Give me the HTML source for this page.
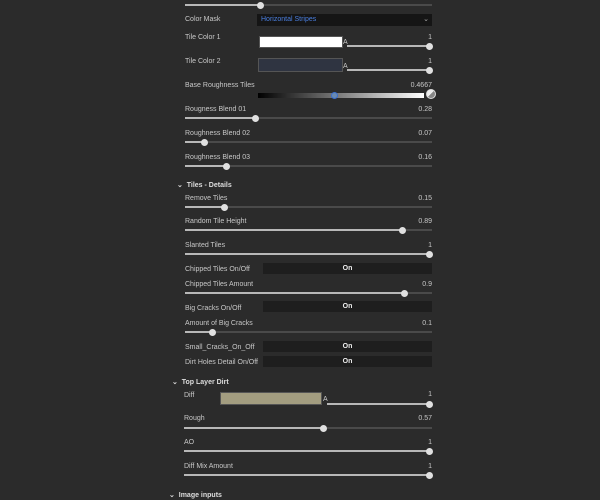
<!DOCTYPE html>
<html><head><style>
body{margin:0;width:600px;height:500px;background:#2b2b2b;font-family:"Liberation Sans",sans-serif;font-size:7px;color:#c8c8c8;position:relative;overflow:hidden}
.a{position:absolute;white-space:nowrap}
.t{position:absolute;height:2px;background:#4a4a4a}
.f{position:absolute;height:2px;background:#b8b8b8}
.k{position:absolute;width:7px;height:7px;border-radius:50%;background:#e0e0e0}
.btn{position:absolute;background:#1e1e1e;color:#eee;text-align:center;height:11px;line-height:11px;font-weight:bold}
.h{position:absolute;font-weight:bold;color:#ddd}
.v{position:absolute;right:168px;white-space:nowrap}
</style></head><body>
<script>
function s(x1,x2,y,th){document.write(`<div class="t" style="left:${x1}px;width:${x2-x1}px;top:${y-1}px"></div><div class="f" style="left:${x1}px;width:${th-x1}px;top:${y-1}px"></div><div class="k" style="left:${th-3.5}px;top:${y-3.5}px"></div>`)}
function L(x,y,t){document.write(`<div class="a" style="left:${x}px;top:${y-2.5}px">${t}</div>`)}
function V(y,t){document.write(`<div class="v" style="top:${y-2.5}px">${t}</div>`)}
s(185,432,5,260);
L(185,18,"Color Mask");
document.write('<div class="a" style="left:257px;top:14px;width:175px;height:12px;background:#151515;color:#4a7fe0;line-height:12px"><span style="margin-left:4px">Horizontal Stripes</span><span style="position:absolute;right:3px;color:#aaa">⌄</span></div>');
L(185,36,"Tile Color 1");
document.write('<div class="a" style="left:259px;top:36px;width:82px;height:10px;background:#fff;border:1px solid #555"></div>');
L(343,41,"A");V(36,"1");s(347,432,46,429);
L(185,60,"Tile Color 2");
document.write('<div class="a" style="left:258px;top:58px;width:83px;height:12px;background:#2f3441;border:1px solid #555"></div>');
L(343,65,"A");V(60,"1");s(347,432,70,429);
L(185,84,"Base Roughness Tiles");V(84,"0.4667");
document.write('<div class="a" style="left:258px;top:93px;width:166px;height:5px;background:linear-gradient(90deg,#000,#fff)"></div><div class="a" style="left:331px;top:92px;width:5px;height:5px;border-radius:50%;border:1px solid #3a6fd0;background:#6a8ab0"></div><div class="a" style="left:426px;top:89px;width:8px;height:8px;border-radius:50%;background:linear-gradient(135deg,#eee 50%,#888 50%);border:1px solid #ddd"></div>');
L(185,108,"Rougness Blend 01");V(108,"0.28");s(185,432,118,255);
L(185,132,"Roughness Blend 02");V(132,"0.07");s(185,432,142,204);
L(185,156,"Roughness Blend 03");V(156,"0.16");s(185,432,166,226);
document.write('<div class="h" style="left:177px;top:181px">⌄&nbsp; Tiles - Details</div>');
L(185,197,"Remove Tiles");V(197,"0.15");s(185,432,207,224);
L(185,220,"Random Tile Height");V(220,"0.89");s(185,432,230,402);
L(185,244,"Slanted Tiles");V(244,"1");s(185,432,254,429);
L(185,268,"Chipped Tiles On/Off");document.write('<div class="btn" style="left:263px;top:263px;width:169px">On</div>');
L(185,283,"Chipped Tiles Amount");V(283,"0.9");s(185,432,293,404);
L(185,307,"Big Cracks On/Off");document.write('<div class="btn" style="left:263px;top:301px;width:169px">On</div>');
L(185,322,"Amount of Big Cracks");V(322,"0.1");s(185,432,332,212);
L(185,346,"Small_Cracks_On_Off");document.write('<div class="btn" style="left:263px;top:341px;width:169px">On</div>');
L(185,361,"Dirt Holes Detail On/Off");document.write('<div class="btn" style="left:263px;top:356px;width:169px">On</div>');
document.write('<div class="h" style="left:172px;top:378px">⌄&nbsp; Top Layer Dirt</div>');
L(184,394,"Diff");
document.write('<div class="a" style="left:220px;top:392px;width:100px;height:11px;background:#a39d80;border:1px solid #555"></div>');
L(323,398,"A");V(393,"1");s(327,432,404,429);
L(184,417,"Rough");V(417,"0.57");s(184,432,428,323);
L(184,441,"AO");V(441,"1");s(184,432,451,429);
L(184,465,"Diff Mix Amount");V(465,"1");s(184,432,475,429);
document.write('<div class="h" style="left:169px;top:491px">⌄&nbsp; Image inputs</div>');
</script>
</body></html>
